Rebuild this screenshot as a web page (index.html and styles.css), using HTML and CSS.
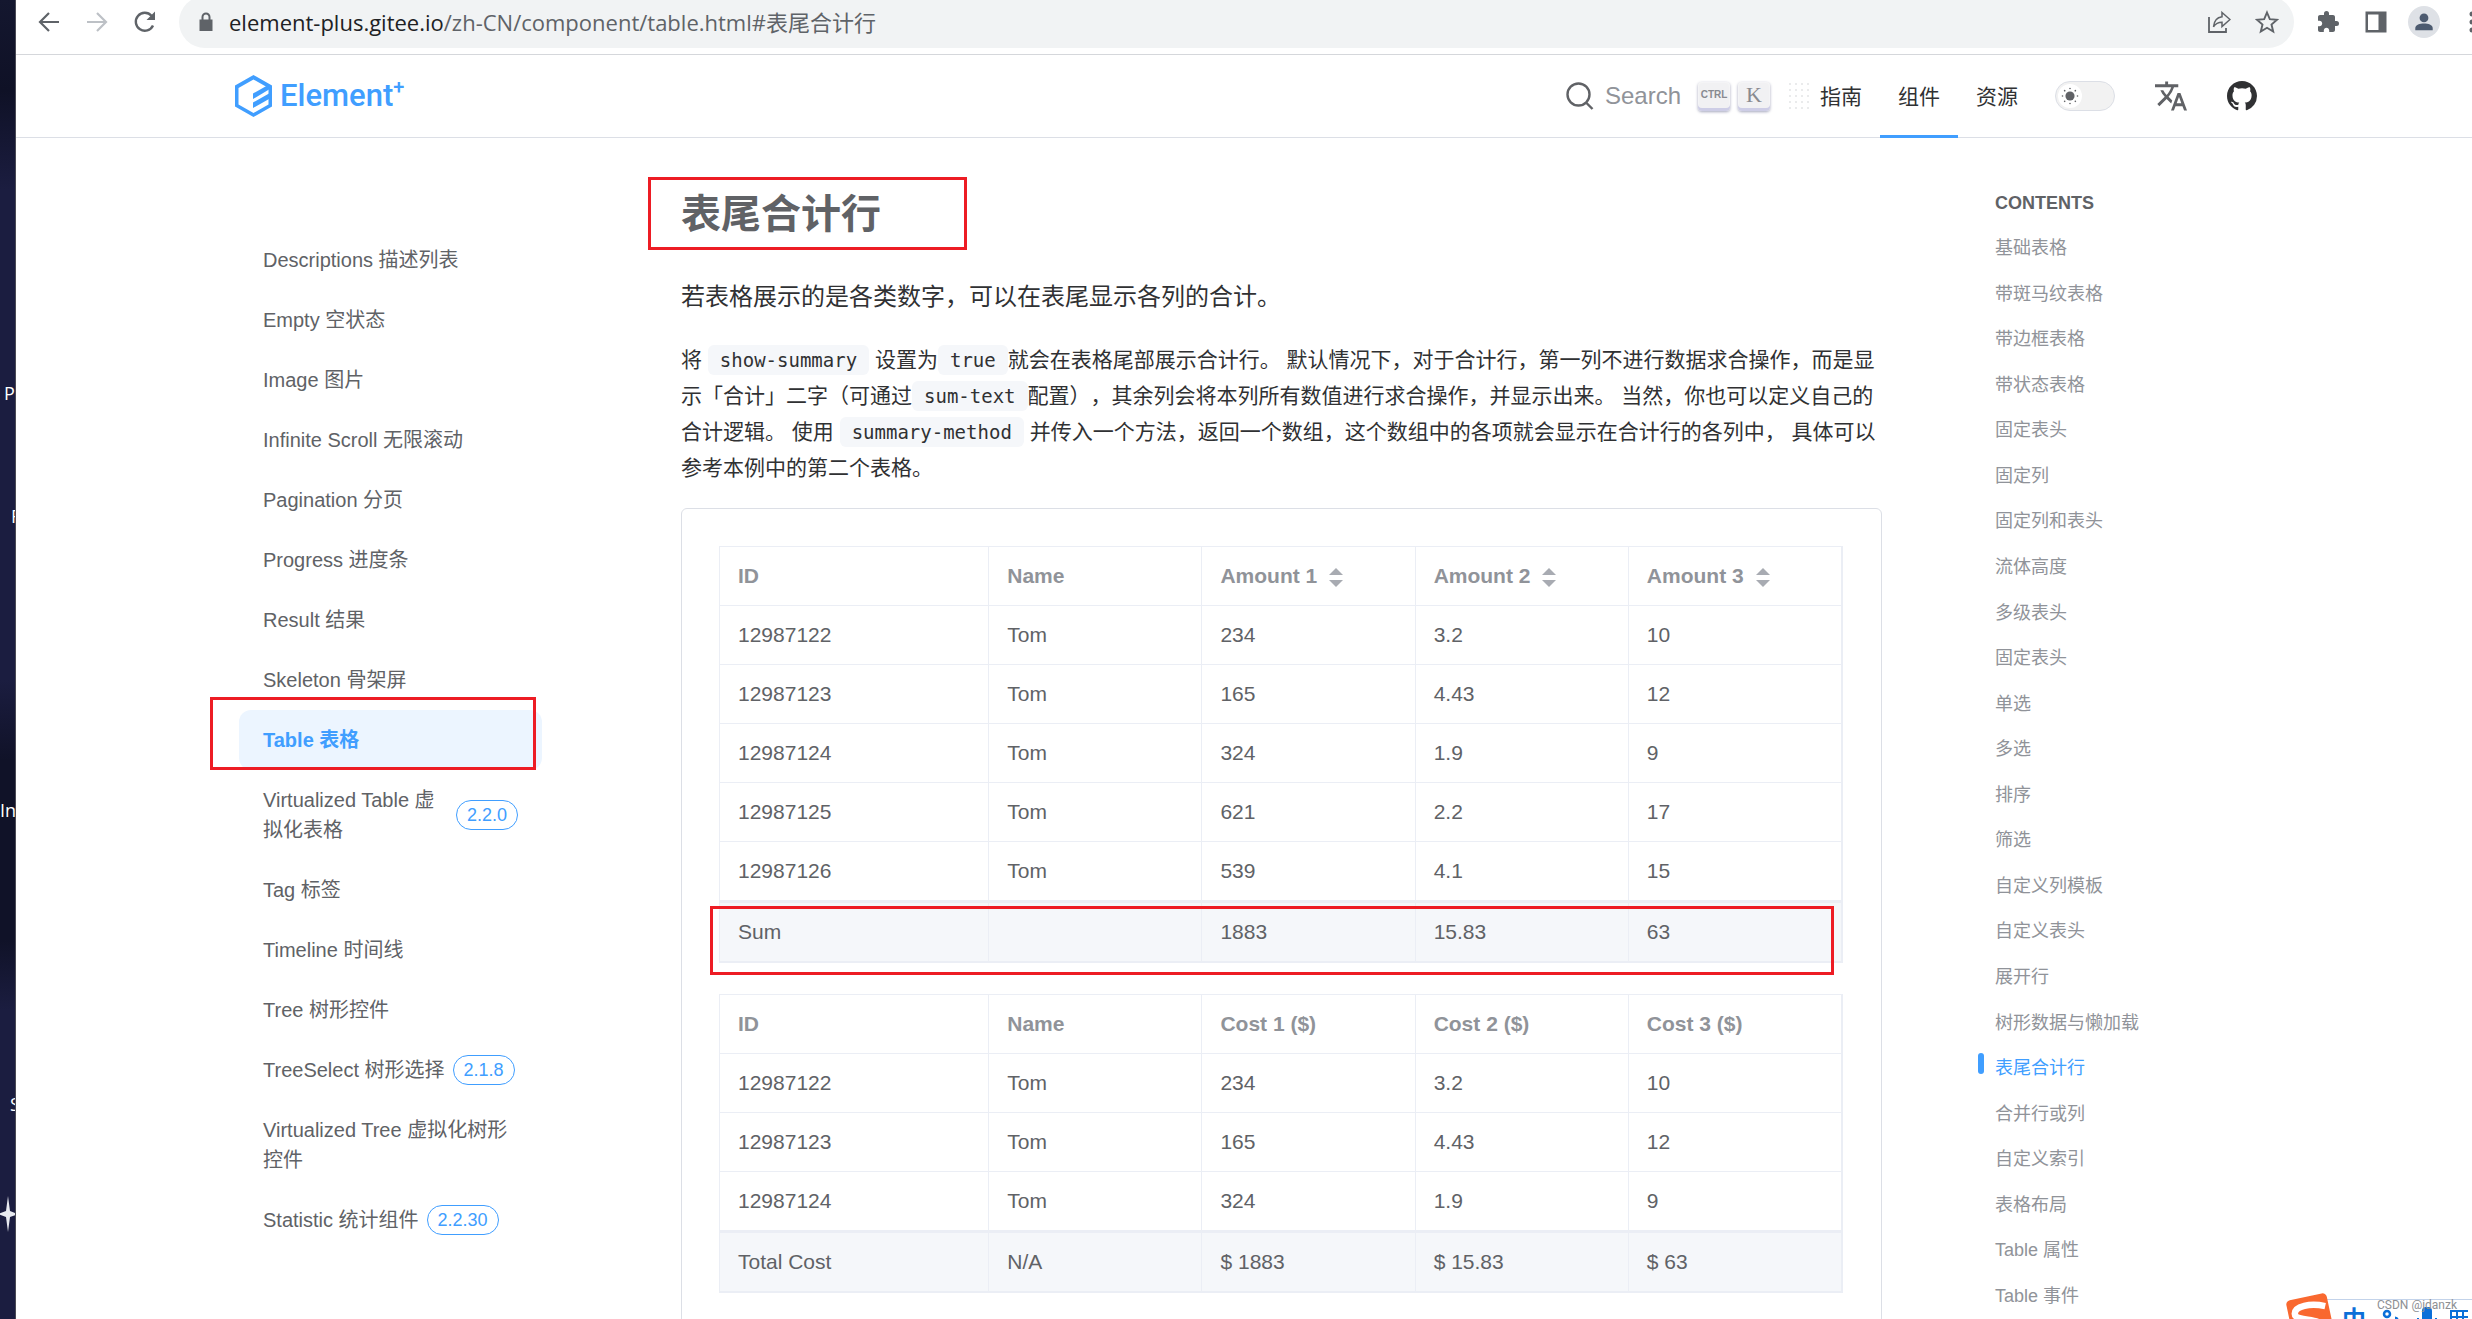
FILE: index.html
```html
<!DOCTYPE html>
<html lang="zh-CN">
<head>
    <meta charset="UTF-8">
    <meta name="viewport" content="width=device-width, initial-scale=1.0">
    <title>Table 表格 | Element Plus</title>
    <link rel="stylesheet" href="styles.css">
</head>
<body>

    <!-- Desktop behind the browser window -->
    <div class="desktop">
        <span class="desktop-label label-p">P</span>
        <span class="desktop-label label-f">F</span>
        <span class="desktop-label label-in">In</span>
        <span class="desktop-label label-s">S</span>
        <svg class="desktop-star" viewBox="0 0 20 36"><path d="M10 0 L12 15 L20 18 L12 21 L10 36 L8 21 L0 18 L8 15 Z" fill="#e8eaf0"/></svg>
    </div>

    <div class="browser">
        <!-- Browser toolbar -->
        <div class="toolbar">
            <button class="tool-button" aria-label="Back">
                <svg viewBox="0 0 24 24"><path d="M22 12H3.500M12 3l-9 9 9 9" fill="none" stroke="#5f6368" stroke-width="2.200"/></svg>
            </button>
            <button class="tool-button" aria-label="Forward">
                <svg viewBox="0 0 24 24"><path d="M2 12h18.500M12 3l9 9-9 9" fill="none" stroke="#bdc1c6" stroke-width="2.200"/></svg>
            </button>
            <button class="tool-button" aria-label="Reload">
                <svg viewBox="0 0 24 24"><path d="M20 15.500A9 9 0 1 1 18.500 5.700L20.500 8" fill="none" stroke="#5f6368" stroke-width="2.400"/><path d="M22 1.500v8.500h-8.500z" fill="#5f6368"/></svg>
            </button>
            <div class="omnibox">
                <svg class="lock" viewBox="0 0 22 22"><path d="M4.500 8.500h13v11.500h-13z" fill="#5f6368"/><path d="M7.500 9V6a3.500 3.500 0 0 1 7 0v3" fill="none" stroke="#5f6368" stroke-width="2"/></svg>
                <div class="url"><span class="url-host">element-plus.gitee.io</span>/zh-CN/component/table.html#表尾合计行</div>
                <button class="tool-button" aria-label="Share">
                    <svg viewBox="0 0 24 24"><path d="M2 7v15h17v-4" fill="none" stroke="#5f6368" stroke-width="1.800"/><path d="M15 2.500l8 7-8 7v-4.200c-4 0-6.500 1.500-8.500 4.500.5-5.500 3.500-9.300 8.500-10z" fill="none" stroke="#5f6368" stroke-width="1.500"/></svg>
                </button>
                <button class="tool-button" aria-label="Bookmark">
                    <svg viewBox="0 0 24 24"><path d="M12 2.500l2.800 6.700 7.200.6-5.500 4.700 1.700 7.100-6.200-3.800-6.200 3.800 1.700-7.100L2 9.800l7.200-.6z" fill="none" stroke="#5f6368" stroke-width="1.900"/></svg>
                </button>
            </div>
            <button class="tool-button" aria-label="Extensions">
                <svg viewBox="0 0 24 24"><path fill="#5f6368" d="M20.500 11H19V7c0-1.100-.9-2-2-2h-4V3.500a2.500 2.500 0 0 0-5 0V5H4c-1.100 0-1.990.9-1.990 2v3.800H3.500c1.490 0 2.700 1.210 2.700 2.700s-1.210 2.700-2.700 2.700H2V20c0 1.100.9 2 2 2h3.800v-1.500c0-1.490 1.210-2.700 2.700-2.700s2.700 1.210 2.700 2.700V22H17c1.100 0 2-.9 2-2v-4h1.500a2.500 2.500 0 0 0 0-5z"/></svg>
            </button>
            <button class="tool-button" aria-label="Side panel">
                <svg viewBox="0 0 24 24"><path fill="#5f6368" fill-rule="evenodd" d="M1.500 1.500h21v21h-21zM4 4.500h10.500v15.500H4z"/></svg>
            </button>
            <button class="tool-button profile" aria-label="Profile">
                <svg viewBox="0 0 24 24"><circle cx="12" cy="7.500" r="4.800" fill="#4d5b70"/><path d="M2.500 21v-2.500c0-3.500 5-5 9.500-5s9.500 1.500 9.500 5V21z" fill="#4d5b70"/></svg>
            </button>
            <button class="tool-button more" aria-label="Menu">
                <svg viewBox="0 0 24 24"><g fill="#5f6368"><circle cx="12" cy="4" r="2.500"/><circle cx="12" cy="12" r="2.500"/><circle cx="12" cy="20" r="2.500"/></g></svg>
            </button>
        </div>

        <!-- Site header -->
        <header class="navbar">
            <a class="logo" href="#">
                <svg viewBox="0 0 37 42">
                    <path fill="#409eff" fill-rule="evenodd" d="M18.500 0L37 10.500v21L18.500 42 0 31.500v-21zM18.500 4.500L3.500 13v16.500l15 8.500 15-8.500V13z"/>
                    <path fill="#409eff" d="M18 18.500l16-9v5L18 24zM18 27.500l16-9v5.500l-16 9z"/>
                </svg>
                <span class="logo-text">Element<sup>+</sup></span>
            </a>
            <button class="search">
                <svg viewBox="0 0 28 28"><circle cx="12.500" cy="12.500" r="11" fill="none" stroke="#606266" stroke-width="2.400"/><path d="M20.500 21l6 6" stroke="#606266" stroke-width="2.400"/></svg>
                <span>Search</span>
                <kbd class="key key-ctrl">CTRL</kbd>
                <kbd class="key key-k">K</kbd>
            </button>
            <span class="dots"></span>
            <nav class="menu">
                <a href="#">指南</a>
                <a href="#" class="active">组件</a>
                <a href="#">资源</a>
            </nav>
            <label class="theme-switch">
                <input type="checkbox" aria-label="Dark mode">
                <svg viewBox="0 0 24 24"><circle cx="12" cy="12" r="5.500" fill="#606266"/><g fill="#606266"><circle cx="12" cy="3" r="1"/><circle cx="12" cy="21" r="1"/><circle cx="3" cy="12" r="1"/><circle cx="21" cy="12" r="1"/><circle cx="5.600" cy="5.600" r="1"/><circle cx="18.400" cy="5.600" r="1"/><circle cx="5.600" cy="18.400" r="1"/><circle cx="18.400" cy="18.400" r="1"/></g></svg>
            </label>
            <button class="icon-button translate" aria-label="Language">
                <svg viewBox="1 2 22 20"><path fill="#606266" d="M12.870 15.070l-2.540-2.510.03-.03A17.520 17.520 0 0 0 14.070 6H17V4h-7V2H8v2H1v1.990h11.170C11.500 7.920 10.440 9.750 9 11.350 8.070 10.320 7.300 9.190 6.690 8h-2c.73 1.630 1.730 3.170 2.980 4.560l-5.090 5.020L4 19l5-5 3.110 3.110.76-2.040zM18.500 10h-2L12 22h2l1.120-3h4.750L21 22h2l-4.500-12zm-2.620 7l1.620-4.330L19.120 17h-3.240z"/></svg>
            </button>
            <a class="icon-button github" href="#" aria-label="GitHub">
                <svg viewBox="0 0 16 16"><path fill="#303133" d="M8 0C3.580 0 0 3.580 0 8c0 3.540 2.290 6.530 5.470 7.590.4.070.55-.17.55-.38 0-.19-.01-.82-.01-1.490-2.010.37-2.530-.49-2.690-.94-.09-.23-.48-.94-.82-1.130-.28-.15-.68-.52-.01-.53.63-.01 1.080.58 1.230.82.72 1.210 1.870.87 2.330.66.07-.52.28-.87.51-1.070-1.780-.2-3.640-.89-3.640-3.950 0-.87.31-1.590.82-2.150-.08-.2-.36-1.020.08-2.120 0 0 .67-.21 2.200.82.64-.18 1.320-.27 2-.27s1.360.09 2 .27c1.530-1.040 2.200-.82 2.200-.82.44 1.100.16 1.920.08 2.120.51.56.82 1.270.82 2.150 0 3.070-1.870 3.750-3.650 3.950.29.25.54.73.54 1.480 0 1.070-.01 1.930-.01 2.200 0 .21.15.46.55.38A8.010 8.010 0 0 0 16 8c0-4.420-3.580-8-8-8z"/></svg>
            </a>
        </header>

        <div class="page">
            <!-- Sidebar -->
            <nav class="sidebar">
                <a href="#">Descriptions 描述列表</a>
                <a href="#">Empty 空状态</a>
                <a href="#">Image 图片</a>
                <a href="#">Infinite Scroll 无限滚动</a>
                <a href="#">Pagination 分页</a>
                <a href="#">Progress 进度条</a>
                <a href="#">Result 结果</a>
                <a href="#">Skeleton 骨架屏</a>
                <a href="#" class="active">Table 表格<span class="mark mark-side"></span></a>
                <a href="#"><span>Virtualized Table 虚拟化表格</span><span class="tag">2.2.0</span></a>
                <a href="#">Tag 标签</a>
                <a href="#">Timeline 时间线</a>
                <a href="#">Tree 树形控件</a>
                <a href="#"><span>TreeSelect 树形选择</span><span class="tag">2.1.8</span></a>
                <a href="#">Virtualized Tree 虚拟化树形控件</a>
                <a href="#"><span>Statistic 统计组件</span><span class="tag">2.2.30</span></a>
            </nav>

            <!-- Document -->
            <main class="content">
                <h2>表尾合计行<span class="mark mark-title"></span></h2>
                <p class="lead">若表格展示的是各类数字，可以在表尾显示各列的合计。</p>
                <p class="text">将 <code>show-summary</code> 设置为<code>true</code>就会在表格尾部展示合计行。 默认情况下，对于合计行，第一列不进行数据求合操作，而是显示「合计」二字（可通过<code>sum-text</code>配置），其余列会将本列所有数值进行求合操作，并显示出来。 当然，你也可以定义自己的合计逻辑。 使用 <code>summary-method</code> 并传入一个方法，返回一个数组，这个数组中的各项就会显示在合计行的各列中， 具体可以参考本例中的第二个表格。</p>

                <div class="demo">
                    <table class="data-table">
                        <colgroup><col class="col-id"><col class="col-name"><col><col><col></colgroup>
                        <thead>
                            <tr>
                                <th>ID</th>
                                <th>Name</th>
                                <th>Amount 1<span class="caret"></span></th>
                                <th>Amount 2<span class="caret"></span></th>
                                <th>Amount 3<span class="caret"></span></th>
                            </tr>
                        </thead>
                        <tbody>
                            <tr><td>12987122</td><td>Tom</td><td>234</td><td>3.2</td><td>10</td></tr>
                            <tr><td>12987123</td><td>Tom</td><td>165</td><td>4.43</td><td>12</td></tr>
                            <tr><td>12987124</td><td>Tom</td><td>324</td><td>1.9</td><td>9</td></tr>
                            <tr><td>12987125</td><td>Tom</td><td>621</td><td>2.2</td><td>17</td></tr>
                            <tr><td>12987126</td><td>Tom</td><td>539</td><td>4.1</td><td>15</td></tr>
                        </tbody>
                        <tfoot>
                            <tr><td>Sum<span class="mark mark-sum"></span></td><td></td><td>1883</td><td>15.83</td><td>63</td></tr>
                        </tfoot>
                    </table>

                    <table class="data-table">
                        <colgroup><col class="col-id"><col class="col-name"><col><col><col></colgroup>
                        <thead>
                            <tr><th>ID</th><th>Name</th><th>Cost 1 ($)</th><th>Cost 2 ($)</th><th>Cost 3 ($)</th></tr>
                        </thead>
                        <tbody>
                            <tr><td>12987122</td><td>Tom</td><td>234</td><td>3.2</td><td>10</td></tr>
                            <tr><td>12987123</td><td>Tom</td><td>165</td><td>4.43</td><td>12</td></tr>
                            <tr><td>12987124</td><td>Tom</td><td>324</td><td>1.9</td><td>9</td></tr>
                        </tbody>
                        <tfoot>
                            <tr><td>Total Cost</td><td>N/A</td><td>$ 1883</td><td>$ 15.83</td><td>$ 63</td></tr>
                        </tfoot>
                    </table>
                </div>
            </main>

            <!-- Table of contents -->
            <aside class="toc">
                <h3>CONTENTS</h3>
                <nav class="toc-list">
                    <a href="#">基础表格</a>
                    <a href="#">带斑马纹表格</a>
                    <a href="#">带边框表格</a>
                    <a href="#">带状态表格</a>
                    <a href="#">固定表头</a>
                    <a href="#">固定列</a>
                    <a href="#">固定列和表头</a>
                    <a href="#">流体高度</a>
                    <a href="#">多级表头</a>
                    <a href="#">固定表头</a>
                    <a href="#">单选</a>
                    <a href="#">多选</a>
                    <a href="#">排序</a>
                    <a href="#">筛选</a>
                    <a href="#">自定义列模板</a>
                    <a href="#">自定义表头</a>
                    <a href="#">展开行</a>
                    <a href="#">树形数据与懒加载</a>
                    <a href="#" class="active">表尾合计行</a>
                    <a href="#">合并行或列</a>
                    <a href="#">自定义索引</a>
                    <a href="#">表格布局</a>
                    <a href="#">Table 属性</a>
                    <a href="#">Table 事件</a>
                </nav>
            </aside>
        </div>
    </div>

    <!-- Input method bar, floats over the bottom right corner -->
    <div class="ime">
        <svg class="ime-logo" viewBox="0 0 46 46">
            <rect x="4" y="4" width="38" height="44" rx="4" fill="#f9682f" transform="rotate(-12 23 23)"/>
            <path d="M37 13c-14-3-28 0-28 7 0 8 26 3 26 13 0 5-6 8-14 8" fill="none" stroke="#fff" stroke-width="6"/>
        </svg>
        <span class="ime-lang">中</span>
        <svg class="ime-icons" viewBox="0 0 88 26">
            <g fill="none" stroke="#0b6fd8">
                <circle cx="7" cy="8" r="3" stroke-width="2.500"/>
                <path d="M15 12c3 0 3 4 1 6" stroke-width="3"/>
                <path d="M38 12c0 14 18 14 18 0" stroke-width="2"/>
                <path d="M71 5h17M71 4v22M71 11h17M71 17h17M77 5v21M83 5v21" stroke-width="2"/>
            </g>
            <rect x="42" y="1" width="10" height="18" rx="4" fill="#0b6fd8"/>
        </svg>
        <span class="watermark">CSDN @jdanzk</span>
    </div>

</body>
</html>
```
FILE: styles.css
```css
* {
    box-sizing: border-box;
}

body {
    margin: 0;
    height: 100vh;
    display: flex;
    overflow: hidden;
    position: relative;
    background-color: #fff;
    color: #303133;
    font-family: "Liberation Sans", "Noto Sans CJK SC", sans-serif;
    text-spacing-trim: space-all;
}

a {
    color: inherit;
    text-decoration: none;
}

button {
    border: none;
    background: none;
    padding: 0;
    font-family: inherit;
    cursor: pointer;
}

svg {
    display: block;
}

/* Desktop strip */
.desktop {
    width: 16px;
    flex-shrink: 0;
    position: relative;
    overflow: hidden;
    background: linear-gradient(#14172f 0, #0f1126 90px, #1b1d40 190px, #1b1d40 680px, #101228 760px, #101228 940px, #1b1d40 1010px);
    border-right: 1px solid #4a4a55;
}

.desktop-label {
    position: absolute;
    color: #fff;
    font-family: "Open Sans", sans-serif;
    font-size: 18px;
    line-height: 24px;
}

.label-p { left: 4px; top: 381px; }
.label-f { left: 11px; top: 504px; }
.label-in { left: 0; top: 798px; }
.label-s { left: 10px; top: 1092px; }

.desktop-star {
    position: absolute;
    left: -2px;
    top: 1196px;
    width: 20px;
    height: 36px;
}

.browser {
    flex: 1;
    min-width: 0;
    display: flex;
    flex-direction: column;
}

/* Browser toolbar */
.toolbar {
    height: 55px;
    flex-shrink: 0;
    display: flex;
    align-items: center;
    gap: 16px;
    padding: 0 0 10px 17px;
    border-bottom: 1px solid #d5d7db;
}

.tool-button {
    width: 32px;
    height: 32px;
    flex-shrink: 0;
    display: flex;
    align-items: center;
    justify-content: center;
}

.tool-button svg {
    width: 24px;
    height: 24px;
}

.omnibox {
    flex: 1;
    height: 52px;
    margin: 0 2px;
    padding: 0 11px 0 16px;
    display: flex;
    align-items: center;
    gap: 16px;
    border-radius: 26px;
    background-color: #f1f3f4;
}

.lock {
    width: 22px;
    height: 22px;
}

.url {
    flex: 1;
    margin-left: -4px;
    font-family: "Open Sans", "Noto Sans CJK SC", sans-serif;
    font-size: 22px;
    line-height: 30px;
    color: #5f6368;
}

.url-host {
    color: #202124;
}

.profile {
    border-radius: 50%;
    background-color: #dee1e6;
}

.profile svg {
    width: 22px;
    height: 22px;
}

.more {
    margin-right: -16px;
}

/* Site header */
.navbar {
    height: 83px;
    flex-shrink: 0;
    display: flex;
    align-items: center;
    padding: 0 215px 0 219px;
    border-bottom: 1px solid #dcdfe6;
}

.logo {
    display: flex;
    align-items: center;
    gap: 8px;
    margin-right: auto;
    color: #409eff;
}

.logo svg {
    width: 37px;
    height: 42px;
}

.logo-text {
    font-family: Roboto, sans-serif;
    font-size: 31px;
    font-weight: 500;
    line-height: 42px;
}

.logo-text sup {
    font-size: 20px;
    line-height: 0;
    vertical-align: 12px;
}

.search {
    display: flex;
    align-items: center;
    gap: 8px;
    font-size: 24px;
    color: #909399;
}

.search svg {
    width: 28px;
    height: 28px;
    margin-right: 3px;
}

.search span {
    margin-right: 9px;
}

.key {
    width: 32px;
    height: 29px;
    border-radius: 4px;
    background-color: #f1f1f3;
    box-shadow: inset 0 -3px 0 #cdcde6, inset 0 0 2px #fff, 0 1px 3px rgba(30, 35, 90, 0.4);
    color: #888a90;
    text-align: center;
}

.key-ctrl {
    font-family: "Liberation Sans", sans-serif;
    font-size: 10px;
    font-weight: bold;
    line-height: 25px;
}

.key-k {
    font-family: "Liberation Serif", serif;
    font-size: 22px;
    line-height: 25px;
}

.dots {
    width: 24px;
    height: 30px;
    margin-left: 17px;
    background-image: radial-gradient(#dcdde0 1px, transparent 1px);
    background-size: 6px 6px;
    opacity: 0.6;
}

.menu {
    align-self: stretch;
    display: flex;
    margin: 0 19px -1px -9px;
}

.menu a {
    display: flex;
    align-items: center;
    padding: 0 18px;
    font-size: 21px;
    border-bottom: 3px solid transparent;
}

.menu .active {
    border-bottom-color: #409eff;
}

.theme-switch {
    width: 60px;
    height: 30px;
    padding: 2px;
    border: 1px solid #dcdfe6;
    border-radius: 15px;
    background-color: #f2f2f2;
    cursor: pointer;
}

.theme-switch input {
    position: absolute;
    opacity: 0;
}

.theme-switch svg {
    width: 24px;
    height: 24px;
    padding: 2px;
    border-radius: 50%;
    background-color: #fff;
}

.icon-button {
    margin-left: 40px;
}

.icon-button svg {
    width: 32px;
    height: 30px;
}

.github svg {
    width: 30px;
}

/* Page columns */
.page {
    flex: 1;
    min-height: 0;
    display: grid;
    grid-template-columns: 303px 1fr 200px;
    grid-template-rows: 100%;
    padding: 0 294px 0 223px;
}

.sidebar {
    padding-top: 92px;
    font-size: 20px;
    line-height: 30px;
    color: #606266;
}

.sidebar a {
    display: flex;
    align-items: center;
    gap: 8px;
    padding: 15px 24px;
    border-radius: 12px;
    position: relative;
}

.sidebar .active {
    background-color: #ecf5ff;
    color: #409eff;
    font-weight: bold;
}

.tag {
    flex-shrink: 0;
    padding: 0 10px;
    border: 1px solid #409eff;
    border-radius: 15px;
    font-size: 18px;
    line-height: 28px;
    color: #409eff;
}

/* Document */
.content {
    padding: 51px 96px 0 139px;
    min-width: 0;
}

.content h2 {
    margin: 0 0 40px;
    font-size: 40px;
    line-height: 50px;
    color: #606266;
    position: relative;
}

.lead {
    margin: 0 0 27px;
    font-size: 24px;
    line-height: 36px;
}

.text {
    margin: 0 0 22px;
    font-size: 21px;
    line-height: 36px;
}

.text code {
    padding: 4px 12px;
    border-radius: 6px;
    background-color: #f5f7fa;
    font-family: "DejaVu Sans Mono", monospace;
    font-size: 19px;
}

.demo {
    padding: 37px 38px 60px 37px;
    border: 1px solid #dcdfe6;
    border-radius: 6px;
}

/* Tables */
.data-table {
    width: 100%;
    table-layout: fixed;
    border-collapse: separate;
    border-spacing: 0;
    margin-bottom: 31px;
    border: solid #ebeef5;
    border-width: 1px 1px 0 1px;
    font-size: 21px;
    line-height: 34px;
    color: #606266;
}

.col-id {
    width: 24%;
}

.col-name {
    width: 19%;
}

.data-table th,
.data-table td {
    height: 59px;
    padding: 0 18px;
    text-align: left;
    border-right: 1px solid #ebeef5;
    border-bottom: 1px solid #ebeef5;
    position: relative;
}

.data-table th {
    color: #909399;
}

.data-table tfoot td {
    height: 62px;
    background-color: #f5f7fa;
    border-top: 2px solid #ebeef5;
    border-bottom-width: 2px;
}

/* Sort arrows */
.caret {
    display: inline-flex;
    flex-direction: column;
    gap: 5px;
    margin-left: 12px;
    vertical-align: middle;
}

.caret::before,
.caret::after {
    content: "";
    border: 7px solid transparent;
}

.caret::before {
    border-top: none;
    border-bottom-color: #a8abb2;
}

.caret::after {
    border-bottom: none;
    border-top-color: #a8abb2;
}

/* Table of contents */
.toc {
    display: flex;
    flex-direction: column;
    min-height: 0;
    padding: 50px 0 8px 17px;
}

.toc h3 {
    margin: 0 0 15px;
    font-size: 18px;
    line-height: 30px;
    color: #606266;
}

.toc-list {
    flex: 1;
    display: flex;
    flex-direction: column;
    justify-content: space-between;
    font-size: 18px;
    line-height: 30px;
    color: #909399;
}

.toc-list a {
    position: relative;
}

.toc-list .active {
    color: #409eff;
}

.toc-list .active::before {
    content: "";
    position: absolute;
    left: -17px;
    top: 0;
    width: 6px;
    height: 21px;
    border-radius: 3px;
    background-color: #409eff;
}

/* Red frames drawn over the page */
.mark {
    position: absolute;
    z-index: 2;
    border: 3px solid #ed1c24;
    pointer-events: none;
}

.mark-title {
    left: -33px;
    top: -12px;
    width: 319px;
    height: 73px;
}

.mark-side {
    left: -29px;
    top: -13px;
    right: 6px;
    height: 73px;
}

.mark-sum {
    left: -10px;
    top: 3px;
    width: 1124px;
    height: 69px;
}

/* Input method bar */
.ime {
    position: absolute;
    right: 0;
    bottom: 0;
    height: 20px;
    width: 146px;
    padding-left: 16px;
    display: flex;
    gap: 14px;
    border-top: 1px solid #c3d3ea;
    background-color: #fff;
}

.ime-logo {
    position: absolute;
    left: -41px;
    top: -8px;
    width: 50px;
    height: 50px;
}

.ime-lang {
    color: #0b6fd8;
    font-size: 24px;
    font-weight: bold;
    line-height: 40px;
}

.ime-icons {
    flex-shrink: 0;
    width: 88px;
    height: 26px;
    margin-top: 6px;
}

.watermark {
    position: absolute;
    right: 15px;
    top: -2px;
    font-family: Roboto, sans-serif;
    font-size: 12px;
    line-height: 14px;
    color: #8d8f93;
}
```
